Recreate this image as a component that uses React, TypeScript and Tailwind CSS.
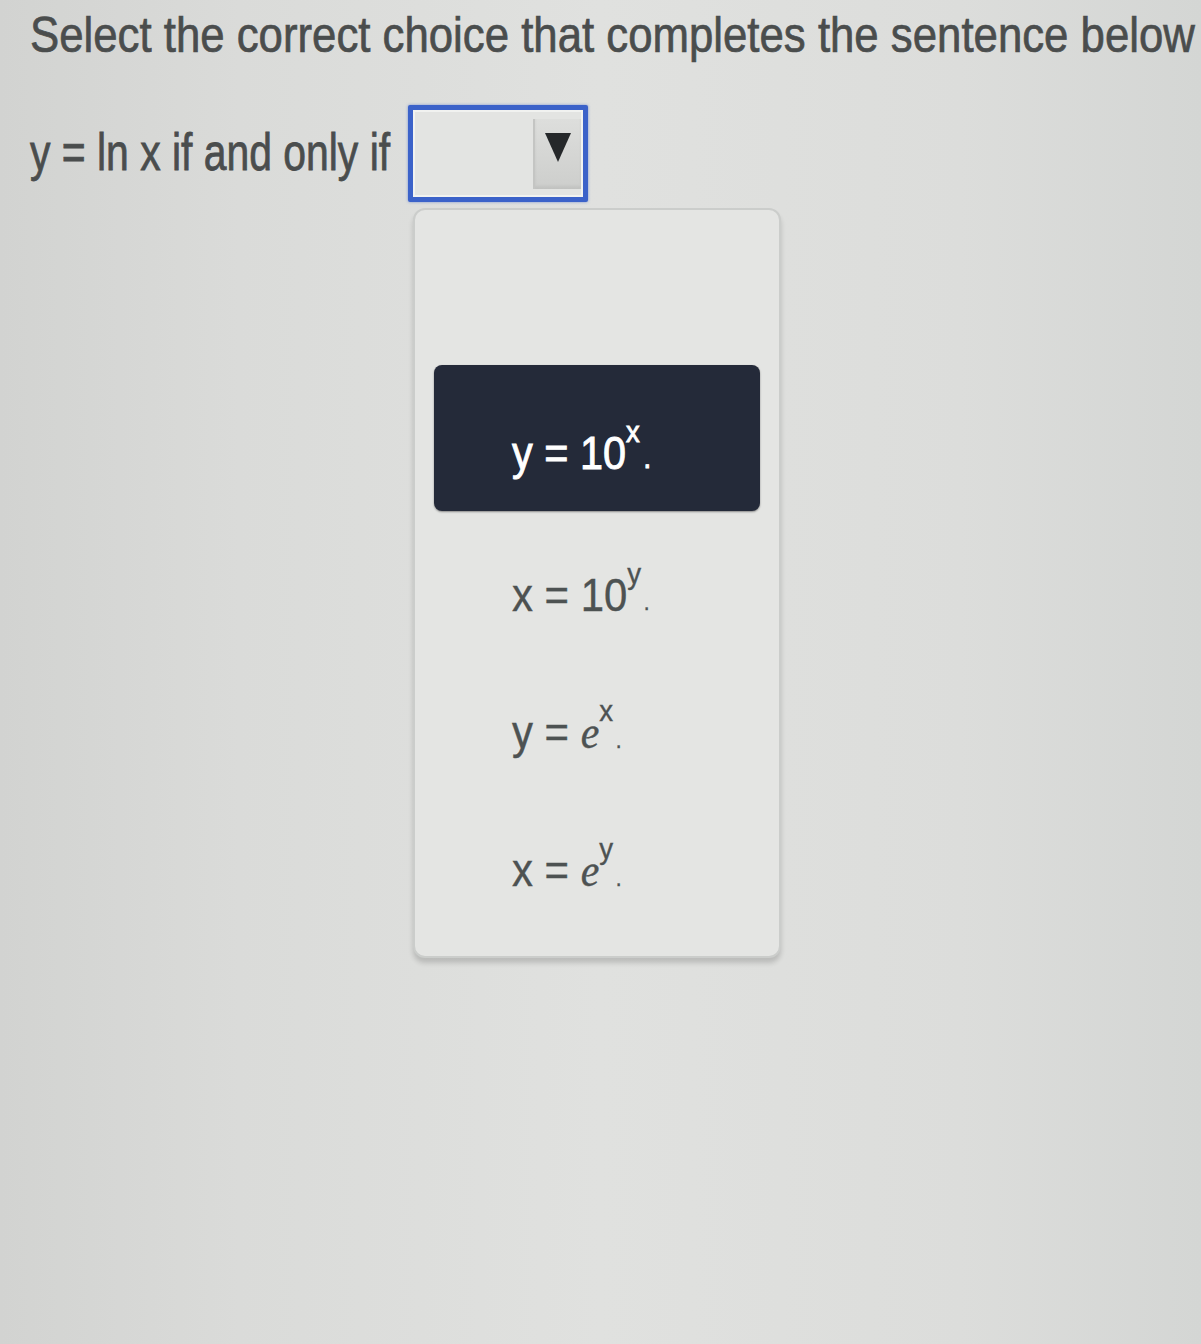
import React from "react";

function Sup({ children, className = "" }: { children: React.ReactNode; className?: string }) {
  return <span className={"relative text-[0.66em] align-[0.88em] " + className}>{children}</span>;
}

export default function App() {
  return (
    <div className="min-h-[1344px] w-full overflow-hidden bg-[linear-gradient(90deg,#d2d3d1_0%,#dadbd9_20%,#e0e1df_50%,#dcdddb_80%,#d4d6d4_100%)] font-['Liberation_Sans',Arial,sans-serif] text-[#4a4d4d]">
      <div className="pl-[30px] pt-[10px]">
        <h1 className="origin-left scale-x-[0.875] whitespace-nowrap text-[50px] leading-none [-webkit-text-stroke:0.7px_#4a4d4d]">
          Select the correct choice that completes the sentence below
        </h1>

        <div className="mt-[45px] flex items-start gap-[18px]">
          <div className="mt-[21px] w-[360px]">
            <div className="origin-left scale-x-[0.786] whitespace-nowrap text-[52px] leading-none [-webkit-text-stroke:0.8px_#4a4d4d]">
              y = ln x if and only if
            </div>
          </div>
          <div className="flex h-[97px] w-[180px] items-center justify-end rounded-[2px] border-[5px] border-[#3b62c9] bg-[#e3e4e2] p-[1px] pr-[2px] shadow-[0_0_3px_rgba(59,98,201,0.6),inset_0_0_0_2px_#f1f2f0]">
            <div className="flex h-[70px] w-[48px] items-start justify-center border-l-[2px] border-[#c4c5c3] bg-[linear-gradient(180deg,#dddedc,#cdcecc)] pt-[12px] shadow-[inset_0_-3px_3px_rgba(0,0,0,0.06)]">
              <svg width="28" height="32" viewBox="0 0 28 32">
                <path d="M1 2 H27 L14 31 Z" fill="#25282a" />
              </svg>
            </div>
          </div>
        </div>

        <div className="ml-[383px] mt-[6px] flex h-[750px] w-[368px] flex-col rounded-[12px] border-[2px] border-[#cbcdcb] bg-[#e4e5e3] shadow-[0_5px_5px_rgba(0,0,0,0.16)]">
          <div className="mx-[19px] mt-[155px] flex h-[146px] items-center rounded-[8px] bg-[#242a39] pl-[78px] pt-[16px] text-[46px] leading-none text-white shadow-[0_1px_2px_rgba(0,0,0,0.4)]">
            <span className="inline-block origin-left scale-x-[0.9] whitespace-nowrap [-webkit-text-stroke:0.9px_#ffffff]">
              y = 10<Sup>x</Sup>
              <span className="pl-[4px] text-[0.7em]">.</span>
            </span>
          </div>
          <div className="mt-[8px] flex flex-col pl-[97px] text-[46px] leading-none text-[#4d5252]">
            <div className="flex h-[138px] items-center">
              <span className="inline-block origin-left scale-x-[0.91] whitespace-nowrap [-webkit-text-stroke:0.4px_#4d5252]">
                x = 10<Sup>y</Sup>
                <span className="pl-[3px] text-[0.5em]">.</span>
              </span>
            </div>
            <div className="flex h-[138px] items-center">
              <span className="inline-block origin-left scale-x-[0.91] whitespace-nowrap [-webkit-text-stroke:0.4px_#4d5252]">
                y = <span className="font-['Liberation_Serif',serif] italic">e</span>
                <Sup>x</Sup>
                <span className="pl-[3px] text-[0.5em]">.</span>
              </span>
            </div>
            <div className="flex h-[138px] items-center">
              <span className="inline-block origin-left scale-x-[0.91] whitespace-nowrap [-webkit-text-stroke:0.4px_#4d5252]">
                x = <span className="font-['Liberation_Serif',serif] italic">e</span>
                <Sup>y</Sup>
                <span className="pl-[3px] text-[0.5em]">.</span>
              </span>
            </div>
          </div>
        </div>
      </div>
    </div>
  );
}
